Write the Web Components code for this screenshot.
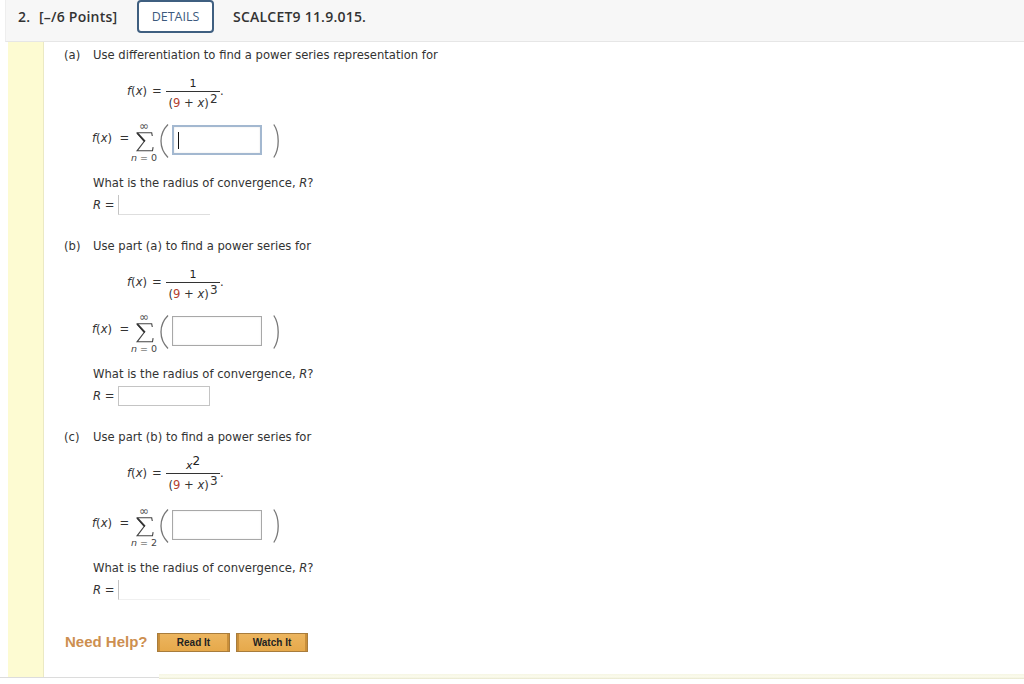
<!DOCTYPE html>
<html lang="en"><head><meta charset="utf-8"><title>SCALCET9 11.9.015</title>
<style>
html,body{margin:0;padding:0;background:#fff;width:1024px;height:684px;overflow:hidden}
body{font:11.6px/14px "DejaVu Sans",Verdana,sans-serif;color:#333}
</style></head><body>
<q-page>
  <q-header slot="header" num="2." points="[–/6 Points]" code="SCALCET9 11.9.015."></q-header>
  <q-part label="(a)" intro="Use differentiation to find a power series representation for" pow="2" lower="0" focus r-style="open"><span slot="num">1</span></q-part>
  <q-part label="(b)" intro="Use part (a) to find a power series for" pow="3" lower="0" r-style="box"><span slot="num">1</span></q-part>
  <q-part label="(c)" intro="Use part (b) to find a power series for" pow="3" lower="2" r-style="open" shift><span slot="num"><i>x</i><sup style="font-size:12px;line-height:0;vertical-align:4px">2</sup></span></q-part>
  <need-help></need-help>
</q-page>
<script>
class QPage extends HTMLElement{constructor(){super();this.attachShadow({mode:'open'}).innerHTML=`<style>
:host{display:block;width:1024px;height:684px;position:relative;box-sizing:border-box}
.hd{padding-left:5px}
.body{margin:0 0 0 8px;height:635px;box-sizing:border-box;background:linear-gradient(90deg,#fdfbd2 0,#fdfbd2 35px,#ebe9c4 35px,#ebe9c4 36px,#fff 36px);padding:6px 0 0 56px}
.foot{height:6px;position:relative;border-top:1px solid #dcdcdc}
.foot::after{content:"";position:absolute;left:159px;right:0;top:-4px;height:5px;background:linear-gradient(#f6f6e4,#fbfbed 60%,#e6e6cc)}
</style><div class="hd"><slot name="header"></slot></div><div class="body"><slot></slot></div><div class="foot"></div>`}}
customElements.define('q-page',QPage);

class QHeader extends HTMLElement{constructor(){super();this.attachShadow({mode:'open'})}
connectedCallback(){const a=n=>this.getAttribute(n);this.shadowRoot.innerHTML=`<style>
:host{display:block;height:42px;box-sizing:border-box;background:#f7f7f7;border-left:1px solid #eee;border-bottom:1px solid #e6e6e6}
.r{display:flex;align-items:center;height:33px;padding-left:12px;font:600 14px/18px "Open Sans",sans-serif;color:#333;letter-spacing:.22px}
.n{width:21px}
.p{width:98px}
.d{margin:0 19px 0 0;width:77px;height:33px;box-sizing:border-box;border:2px solid #3f5f80;border-radius:4px;background:#fff;color:#3c5a7d;font:400 12.5px/29px "Open Sans",sans-serif;text-align:center;letter-spacing:0}
</style><div class="r"><span class="n">${a('num')}</span><span class="p">${a('points')}</span><span class="d">DETAILS</span><span class="c">${a('code')}</span></div>`}}
customElements.define('q-header',QHeader);

class MFrac extends HTMLElement{constructor(){super();this.attachShadow({mode:'open'})}
connectedCallback(){const p=this.getAttribute('pow');this.shadowRoot.innerHTML=`<style>
:host{display:flex;align-items:center;height:33px;margin-left:34px;font:11.6px/14px "DejaVu Sans",sans-serif;color:#333}
i{font-style:italic}
.l{width:39px;white-space:nowrap}
.l b{font-weight:400;margin-left:5px}
.f{display:inline-flex;flex-direction:column;align-items:center;width:54px}
.t{height:24px;box-sizing:border-box;padding-top:9px;line-height:15px;text-align:center;color:#222;font-size:11px}
.b{border-top:1px solid #333;width:54px;text-align:center;height:23px;line-height:22px;white-space:nowrap}
.nine{color:#b5412f}
sup{font-size:12px;line-height:0;vertical-align:4px;margin-left:1px}
</style><span class="l"><i>f</i>(<i>x</i>)<b>=</b></span><span class="f"><span class="t"><slot></slot></span><span class="b">(<span class="nine">9</span> + <i>x</i>)<sup>${p}</sup></span></span><span>.</span>`}}
customElements.define('m-frac',MFrac);

class MSum extends HTMLElement{constructor(){super();this.attachShadow({mode:'open'})}
connectedCallback(){const lo=this.getAttribute('lower'),foc=this.hasAttribute('focus');this.shadowRoot.innerHTML=`<style>
:host{display:flex;align-items:center;height:40px;color:#333;font:11.6px/14px "DejaVu Sans",sans-serif}
i{font-style:italic}
.l{width:39px;white-space:nowrap;margin:0 0 8px -1px}
.s{width:26px;height:40px;display:flex;flex-direction:column;align-items:center;box-sizing:border-box;padding-top:1px}
.inf{font-size:12px;line-height:7px;height:7px;color:#555}
.sig{display:block;width:19px;height:20px;margin-top:2px}
.lo{font-size:9.500px;line-height:9px;height:9px;margin-top:1px;color:#444;white-space:nowrap}
.p{display:block;width:9px;height:34px;flex:none;margin:0 0 2px 3px}
.in{width:90px;height:30px;box-sizing:border-box;flex:none;background:#fff;border:${foc?'2px solid #a3b8d0':'1px solid #a8a8a8'};position:relative;margin:0 0 4px 3px;box-shadow:inset 0 0 2px #e3e3e3}
.in b{display:${foc?'block':'none'};position:absolute;left:4px;top:5px;width:1px;height:17px;background:#111}
.p2{width:6px;margin-left:11px}
</style><span class="l"><i>f</i>(<i>x</i>) &nbsp;=</span><span class="s"><span class="inf">∞</span><svg class="sig" viewBox="0 0 18 20"><path d="M1 .8H16.200L16.800 4M1.300 1 8.800 9.400 1.600 18.800H17L17.600 15.200" fill="none" stroke="#444" stroke-width="1.100"/><path d="M1.800 1 9.400 9.400" fill="none" stroke="#333" stroke-width="1.800"/></svg><span class="lo"><i>n</i> = ${lo}</span></span><svg class="p" viewBox="0 0 9 34"><path d="M8 .5C2.500 6 1 12 1 17s1.500 11 7 16.500" fill="none" stroke="#777" stroke-width="1.300"/></svg><span class="in"><b></b></span><svg class="p p2" viewBox="0 0 6 34"><path d="M.8 .5C4.500 6 5.200 12 5.200 17S4.500 28 .8 33.500" fill="none" stroke="#777" stroke-width="1.300"/></svg>`}}
customElements.define('m-sum',MSum);

class QPart extends HTMLElement{constructor(){super();this.attachShadow({mode:'open'})}
connectedCallback(){const a=n=>this.getAttribute(n),sh=this.hasAttribute('shift'),box=a('r-style')==='box';
this.shadowRoot.innerHTML=`<style>
:host{display:block;height:191px;font:11.6px/14px "DejaVu Sans",sans-serif;color:#333}
.top{display:flex;height:14px}
.lb{width:29px}
.c{margin-left:29px}
m-frac{margin-top:12px}
m-sum{margin-top:${sh?'18px':'15px'}}
.q{margin-top:14px;height:14px}
.r{display:flex;align-items:center;height:20px;margin-top:5px}
.r .t{width:25px}
.a{width:92px;height:20px;box-sizing:border-box;background:#fff;border-left:1px solid #c4c4c4;border-bottom:1px solid ${sh?'#f0f0f0':'#dedede'};${box?'border:1px solid #c4c4c4;':''}}
i{font-style:italic}
</style><div class="top"><span class="lb">${a('label')}</span><span>${a('intro')}</span></div>
<div class="c"><m-frac pow="${a('pow')}"><slot name="num"></slot></m-frac>
<m-sum lower="${a('lower')}" ${this.hasAttribute('focus')?'focus':''}></m-sum>
<div class="q">What is the radius of convergence, <i>R</i>?</div>
<div class="r"><span class="t"><i>R</i> =</span><span class="a"></span></div></div>`}}
customElements.define('q-part',QPart);

class HelpBtn extends HTMLElement{constructor(){super();this.attachShadow({mode:'open'}).innerHTML=`<style>
:host{display:block;box-sizing:border-box;height:19px;background:#dfa44a;border:1px solid #a87c3c;box-shadow:inset 0 0 0 1px #f0c67c;font:700 10px/17px "Liberation Sans",Arial,sans-serif;color:#222;text-align:center}
div{height:100%;border-left:2px solid #c98f3a;border-right:2px solid #c98f3a;box-sizing:border-box;background:linear-gradient(#ecb55f,#e6a94b)}
</style><div><slot></slot></div>`}}
customElements.define('help-btn',HelpBtn);

class NeedHelp extends HTMLElement{constructor(){super();this.attachShadow({mode:'open'}).innerHTML=`<style>
:host{display:flex;align-items:center;height:20px;margin-top:11px;margin-left:1px}
span{font:700 15px/20px "Liberation Sans",Arial,sans-serif;color:#cd8f50;width:92px}
help-btn:nth-of-type(1){width:73px;margin-right:6px}
help-btn:nth-of-type(2){width:72px}
</style><span>Need Help?</span><help-btn>Read It</help-btn><help-btn>Watch It</help-btn>`}}
customElements.define('need-help',NeedHelp);
</script>
</body></html>
